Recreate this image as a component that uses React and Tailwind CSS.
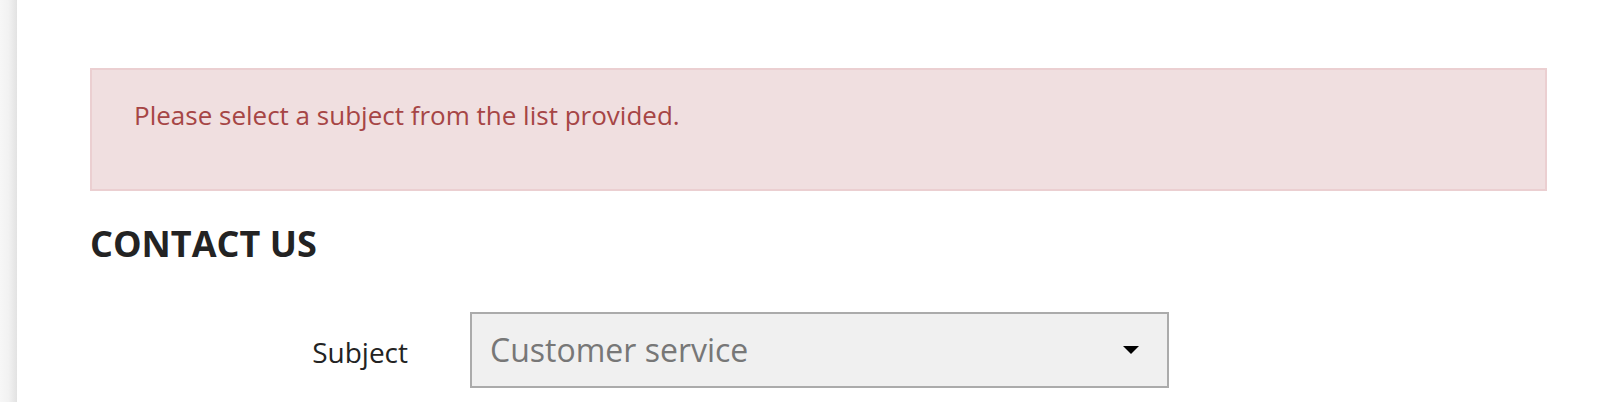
import React from 'react';

const font = { fontFamily: '"Open Sans", "Noto Sans", sans-serif' };

function CaretDown() {
  return (
    <svg width="16" height="8" viewBox="0 0 16 8" className="block">
      <path d="M0 0 L16 0 L8 8 Z" fill="#000" />
    </svg>
  );
}

export default function App() {
  return (
    <div className="flex h-[402px] w-full overflow-hidden bg-white" style={font}>
      {/* side edge */}
      <div className="w-[17px] shrink-0 bg-gradient-to-r from-[#f7f7f7] via-[#f2f2f2] to-[#e2e2e2]"></div>

      <div className="flex-1 pl-[73px] pr-[69px] pt-[68px]">
        <div className="border-2 border-[#ebcfd1] bg-[#f0dfe0] px-[42px] pt-[27px] pb-[55px]">
          <p className="text-[26px] leading-[37px] text-[#a64545]">
            Please select a subject from the list provided.
          </p>
        </div>

        <h1 className="mt-[31px] text-[36px] leading-[44px] font-bold text-[#232323]">
          CONTACT US
        </h1>

        <div className="mt-[46px] flex items-center">
          <label className="w-[320px] pr-[2px] pt-[4px] text-right text-[28px] leading-[38px] text-[#232323]">
            Subject
          </label>
          <div className="ml-[60px] flex h-[76px] w-[699px] items-center justify-between border-2 border-[#ababab] bg-[#f0f0f0] pl-[18px] pr-[28px]">
            <span className="text-[32px] leading-[40px] text-[#777777]">Customer service</span>
            <CaretDown />
          </div>
        </div>
      </div>
    </div>
  );
}
